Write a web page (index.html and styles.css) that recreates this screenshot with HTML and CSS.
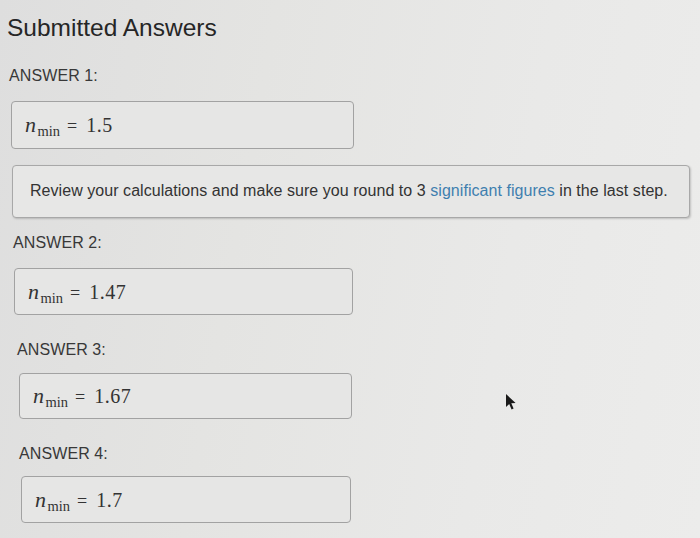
FILE: index.html
```html
<!DOCTYPE html>
<html lang="en">
<head>
<meta charset="utf-8">
<title>Submitted Answers</title>
<link rel="stylesheet" href="styles.css">
</head>
<body>
<main class="page">
  <h1 class="title">Submitted Answers</h1>

  <section class="answer answer-1">
    <div class="label">ANSWER 1:</div>
    <div class="box box-1">
      <span class="math"><span class="var">n</span><span class="sub">min</span><span class="eq">=</span><span class="num">1.5</span></span>
    </div>
    <div class="feedback"><p class="feedback-text">Review your calculations and make sure you round to 3 <span class="link">significant figures</span> in the last step.</p></div>
  </section>

  <section class="answer answer-2">
    <div class="label">ANSWER 2:</div>
    <div class="box box-2">
      <span class="math"><span class="var">n</span><span class="sub">min</span><span class="eq">=</span><span class="num">1.47</span></span>
    </div>
  </section>

  <section class="answer answer-3">
    <div class="label">ANSWER 3:</div>
    <div class="box box-3">
      <span class="math"><span class="var">n</span><span class="sub">min</span><span class="eq">=</span><span class="num">1.67</span></span>
    </div>
  </section>

  <section class="answer answer-4">
    <div class="label">ANSWER 4:</div>
    <div class="box box-4">
      <span class="math"><span class="var">n</span><span class="sub">min</span><span class="eq">=</span><span class="num">1.7</span></span>
    </div>
  </section>

  <svg class="cursor" width="14" height="18" viewBox="0 0 14 18" aria-hidden="true">
    <path d="M2 1 L2 14 L5.2 11 L7.6 16.5 L9.6 15.6 L7.3 10.2 L11.6 10 Z" fill="#1a1a1a"/>
  </svg>
</main>
</body>
</html>
```

FILE: styles.css
```css
html, body {
  margin: 0;
  padding: 0;
}

body {
  width: 700px;
  height: 538px;
  overflow: hidden;
  font-family: "Liberation Sans", Arial, sans-serif;
  color: #353535;
  background: linear-gradient(100deg, #dedede 0%, #e4e4e2 35%, #e9e9e8 70%, #ececeb 100%);
}

.page {
  position: relative;
  height: 538px;
  padding: 14px 0 0 7px;
  box-sizing: border-box;
}

.title {
  margin: 0;
  font-size: 24.5px;
  line-height: 28px;
  font-weight: normal;
  color: #262626;
}

.answer {
  display: flex;
  flex-direction: column;
  gap: 16px;
  margin-top: 26px;
}

.answer-1 { margin-top: 25px; margin-left: 2px; }
.answer-2 { margin-top: 16px; margin-left: 6px; }
.answer-3 { margin-left: 10px; gap: 14px; }
.answer-4 { margin-left: 12px; gap: 13px; }

.label {
  font-size: 16px;
  line-height: 18px;
  letter-spacing: 0.1px;
  color: #383838;
}

.box {
  display: flex;
  align-items: center;
  box-sizing: border-box;
  border: 1px solid #a2a2a2;
  border-radius: 4px;
  padding-left: 13px;
  background: #e6e6e5;
}

.box-1 { width: 343px; height: 48px; margin-left: 2px; }
.box-2 { width: 339px; height: 47px; margin-left: 1px; }
.box-3 { width: 333px; height: 46px; margin-left: 2px; }
.box-4 { width: 330px; height: 47px; margin-left: 2px; }

.feedback {
  width: 678px;
  height: 53px;
  margin-left: 3px;
  box-sizing: border-box;
  padding: 0 0 0 17px;
  border: 1px solid #a8a8a8;
  border-radius: 4px;
  background: #e7e7e6;
  box-shadow: 1px 1px 2px rgba(0, 0, 0, 0.18);
}

.feedback-text {
  margin: 0;
  font-size: 16px;
  line-height: 50px;
  letter-spacing: 0.05px;
  color: #333;
}

.link {
  color: #3f7faf;
}

.math {
  font-family: "Liberation Serif", "Times New Roman", serif;
  font-size: 20px;
  color: #333;
  display: inline-flex;
  align-items: baseline;
}

.var {
  font-style: italic;
  font-size: 22px;
  letter-spacing: 0.5px;
}

.sub {
  font-size: 14.5px;
  position: relative;
  top: 4px;
  margin-left: 1px;
}

.eq {
  margin: 0 9px 0 7px;
  font-size: 18px;
}

.num {
  letter-spacing: 0.5px;
}

.cursor {
  position: absolute;
  left: 504px;
  top: 393px;
}
```
